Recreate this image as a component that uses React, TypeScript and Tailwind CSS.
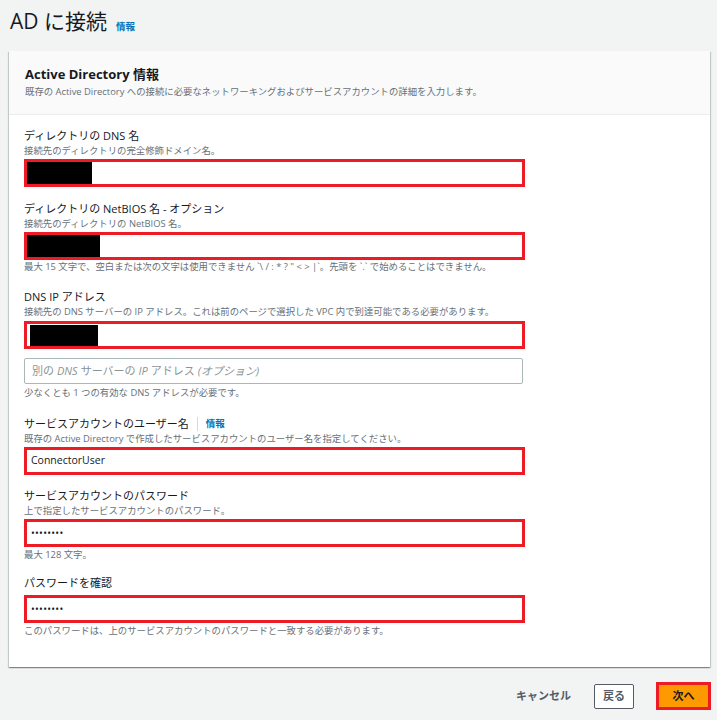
import React from "react";

const font = {
  fontFamily: '"Open Sans", "Noto Sans", "Noto Sans CJK JP", sans-serif',
};

function Label({ children }: { children: React.ReactNode }) {
  return <div className="text-[11px] leading-[16px] text-[#16191f]">{children}</div>;
}
function Desc({ children }: { children: React.ReactNode }) {
  return <div className="text-[9.4px] leading-[14px] text-[#687078]">{children}</div>;
}
function RedInput({ children }: { children?: React.ReactNode }) {
  return (
    <div className="w-[501px] h-[28px] border-[3px] border-[#ed1c24] bg-white flex items-center">
      {children}
    </div>
  );
}

export default function App() {
  return (
    <div className="min-h-[720px] bg-[#f2f3f3] pb-[10px]" style={font}>
      <div className="pt-[7px] pl-[10px] flex items-baseline gap-[9px]">
        <h1 className="text-[21px] leading-[28px] text-[#16191f] font-normal">AD に接続</h1>
        <span className="text-[9.5px] font-bold text-[#0073bb] relative top-[1px]">情報</span>
      </div>

      <div className="mt-[16px] ml-[9px] w-[701px] bg-white shadow-[0_1px_1px_0_rgba(0,28,36,0.3),1px_1px_1px_0_rgba(0,28,36,0.15),-1px_1px_1px_0_rgba(0,28,36,0.15)]">
        <div className="bg-[#fafafa] border-b border-[#eaeded] pt-[13px] pb-[15px] pl-[16px]">
          <div className="text-[13px] leading-[20px] font-bold text-[#16191f]">Active Directory 情報</div>
          <div className="mt-[1px] text-[9.4px] leading-[14px] text-[#687078]">
            既存の Active Directory への接続に必要なネットワーキングおよびサービスアカウントの詳細を入力します。
          </div>
        </div>

        <div className="pl-[15px] pt-[13px] pb-[29px]">
          {/* DNS name */}
          <Label>ディレクトリの DNS 名</Label>
          <Desc>接続先のディレクトリの完全修飾ドメイン名。</Desc>
          <div className="mt-[1px]">
            <RedInput>
              <div className="w-[65px] h-[22px] bg-black" />
            </RedInput>
          </div>

          {/* NetBIOS */}
          <div className="mt-[14px]">
            <Label>ディレクトリの NetBIOS 名 - オプション</Label>
            <Desc>接続先のディレクトリの NetBIOS 名。</Desc>
            <div className="mt-[1px]">
              <RedInput>
                <div className="w-[73px] h-[22px] bg-black" />
              </RedInput>
            </div>
            <Desc>
              最大 15 文字で、空白または次の文字は使用できません `\ / : * ? " &lt; &gt; |`。先頭を `.` で始めることはできません。
            </Desc>
          </div>

          {/* DNS IP */}
          <div className="mt-[15px]">
            <Label>DNS IP アドレス</Label>
            <Desc>接続先の DNS サーバーの IP アドレス。これは前のページで選択した VPC 内で到達可能である必要があります。</Desc>
            <div className="mt-[2px]">
              <RedInput>
                <div className="ml-[3px] w-[68px] h-[21px] bg-black" />
              </RedInput>
            </div>
            <div className="mt-[9px] w-[499px] h-[26px] border border-[#aab7b8] rounded-[2px] bg-white flex items-center pl-[7px] text-[11px] text-[#879596]">
              別の <i className="mx-[3px]">DNS</i> サーバーの <i className="mx-[3px]">IP</i> アドレス <i className="ml-[3px]">(オプション)</i>
            </div>
            <div className="mt-[2px]">
              <Desc>少なくとも 1 つの有効な DNS アドレスが必要です。</Desc>
            </div>
          </div>

          {/* user name */}
          <div className="mt-[16px]">
            <div className="flex items-center">
              <Label>サービスアカウントのユーザー名</Label>
              <span className="mx-[8px] w-px h-[14px] bg-[#d5dbdb]" />
              <span className="text-[9.5px] font-bold text-[#0073bb]">情報</span>
            </div>
            <Desc>既存の Active Directory で作成したサービスアカウントのユーザー名を指定してください。</Desc>
            <div className="mt-[1px]">
              <RedInput>
                <span className="pl-[4px] text-[10.5px] text-[#16191f]">ConnectorUser</span>
              </RedInput>
            </div>
          </div>

          {/* password */}
          <div className="mt-[13px]">
            <Label>サービスアカウントのパスワード</Label>
            <Desc>上で指定したサービスアカウントのパスワード。</Desc>
            <div className="mt-[1px]">
              <RedInput>
                <span className="pl-[4px] text-[10px] text-[#16191f] tracking-[0.3px]">••••••••</span>
              </RedInput>
            </div>
            <div className="mt-[1px]">
              <Desc>最大 128 文字。</Desc>
            </div>
          </div>

          {/* confirm */}
          <div className="mt-[13px]">
            <Label>パスワードを確認</Label>
            <div className="mt-[4px]">
              <RedInput>
                <span className="pl-[4px] text-[10px] text-[#16191f] tracking-[0.3px]">••••••••</span>
              </RedInput>
            </div>
            <div className="mt-[1px]">
              <Desc>このパスワードは、上のサービスアカウントのパスワードと一致する必要があります。</Desc>
            </div>
          </div>
        </div>
      </div>

      <div className="mt-[15px] flex items-center justify-end pr-[6px]">
        <span className="text-[11px] font-bold text-[#545b64]">キャンセル</span>
        <button className="ml-[23px] h-[25px] w-[40px] border border-[#545b64] bg-white text-[11px] font-bold text-[#545b64] rounded-[2px]">
          戻る
        </button>
        <button className="ml-[22px] h-[28px] w-[55px] border-[3px] border-[#ed1c24] bg-[#ff9900] text-[11px] font-bold text-[#16191f]">
          次へ
        </button>
      </div>
    </div>
  );
}
